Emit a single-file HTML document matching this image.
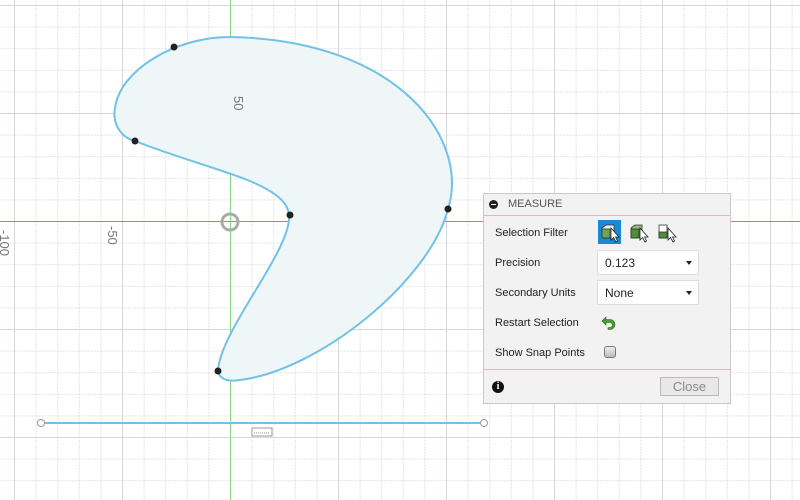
<!DOCTYPE html>
<html><head><meta charset="utf-8"><style>
body{margin:0;width:800px;height:500px;overflow:hidden;background:#fff;font-family:"Liberation Sans",sans-serif;}
#p{position:absolute;left:483px;top:193px;width:248px;height:211px;background:#f2f2f2;border:1px solid #c8c8c8;box-sizing:border-box;font-size:11px;color:#222;}
.hd{height:21px;border-bottom:1px solid #e2b8b8;line-height:21px;color:#555;padding-left:24px;position:relative}
.hd:before{content:"";position:absolute;left:5px;top:6px;width:9px;height:9px;border-radius:50%;background:#222}
.hd:after{content:"";position:absolute;left:7px;top:10px;width:5px;height:1px;background:#fff}
.lb{position:absolute;left:11px}
.dd{position:absolute;left:113px;width:102px;height:25px;background:#fff;border:1px solid #ddd;box-sizing:border-box;line-height:24px;padding-left:7px;font-size:12px}
.dd:after{content:"";position:absolute;right:6px;top:10px;border:3px solid transparent;border-top:4px solid #222}
.ft{position:absolute;left:0;right:0;top:175px;border-top:1px solid #e2b8b8}
.btn{position:absolute;left:176px;top:183px;width:59px;height:19px;border:1px solid #bbb;box-sizing:border-box;background:#e8e8e8;color:#888;font-size:13px;text-align:center;line-height:17px}
</style></head><body>
<svg width="800" height="500" style="position:absolute;left:0;top:0">
<defs><pattern id="g" x="14" y="5" width="21.6" height="21.6" patternUnits="userSpaceOnUse"><path d="M0.5 0V21.6M0 0.5H21.6" stroke="#dfe4e4" stroke-width="1" stroke-dasharray="2 1" fill="none"/></pattern></defs>
<rect width="800" height="500" fill="url(#g)"/>
<g fill="#d3d9d9">
<rect x="14" y="0" width="1" height="500"/><rect x="122" y="0" width="1" height="500"/><rect x="338" y="0" width="1" height="500"/><rect x="446" y="0" width="1" height="500"/><rect x="554" y="0" width="1" height="500"/><rect x="662" y="0" width="1" height="500"/><rect x="770" y="0" width="1" height="500"/>
<rect x="0" y="5" width="800" height="1"/><rect x="0" y="329" width="800" height="1"/><rect x="0" y="437" width="800" height="1"/>
</g>
<rect x="0" y="113" width="800" height="1" fill="#ebcccc"/>
<rect x="0" y="221" width="800" height="1" fill="#e07070"/>
<rect x="230" y="0" width="1" height="500" fill="#86d886"/>
<path d="M230,37 C175,37 120,70 115,108 C112,125 122,138 135,141 C170,155 210,166 245,179 C270,189 288,200 289,215 C292,250 220,330 218,371 C220,380 228,382 240,380 C320,370 430,280 448,209 C470,140 400,40 230,37 Z" fill="#eef6f8" stroke="#71c1e8" stroke-width="2"/>
<g fill="#222"><circle cx="174" cy="47" r="3.5"/><circle cx="135" cy="141" r="3.5"/><circle cx="290" cy="215" r="3.5"/><circle cx="448" cy="209" r="3.5"/><circle cx="218" cy="371" r="3.5"/></g>
<circle cx="230" cy="222" r="8" fill="none" stroke="#aaa" stroke-width="3"/>
<line x1="41" y1="423" x2="484" y2="423" stroke="#71c1e8" stroke-width="2"/>
<circle cx="41" cy="423" r="3.5" fill="#fff" stroke="#999"/><circle cx="484" cy="423" r="3.5" fill="#fff" stroke="#999"/>
<rect x="252" y="428" width="20" height="8" fill="#fff" stroke="#999"/><line x1="254" y1="433" x2="270" y2="433" stroke="#999" stroke-dasharray="1 1"/>
<g fill="#777" font-size="13" font-family="Liberation Sans">
<text transform="translate(234,96) rotate(90)">50</text>
<text transform="translate(108,226) rotate(90)">-50</text>
<text transform="translate(0,230) rotate(90)">-100</text>
</g>
</svg>
<div id="p">
<div class="hd">MEASURE</div>
<div class="lb" style="top:33px">Selection Filter</div>
<div style="position:absolute;left:114px;top:26px;width:23px;height:24px;background:#1a8ad4"></div>
<svg style="position:absolute;left:114px;top:26px" width="80" height="24">
<g stroke="#333" stroke-width="0.8">
<path d="M4 8 L8 5 H16 V15 L12 18 H4Z" fill="#eee"/><rect x="4" y="9" width="8" height="9" fill="#6aa84f"/>
<path d="M33 8 L37 5 H44 V15 L41 18 H33Z" fill="#8fc16f"/><rect x="33" y="9" width="8" height="9" fill="#4e8f3a"/>
<rect x="61" y="5" width="8" height="13" fill="#fff"/><rect x="61" y="12" width="8" height="6" fill="#4e8f3a"/>
</g>
<g fill="#fff" stroke="#222" stroke-width="0.8"><path d="M13 8 V20 L15.5 17.5 L18 22 L19.5 21 L17.5 17 H21Z"/><path d="M42 8 V20 L44.5 17.5 L47 22 L48.5 21 L46.5 17 H50Z"/><path d="M70 8 V20 L72.5 17.5 L75 22 L76.5 21 L74.5 17 H78Z"/></g>
</svg>
<div class="lb" style="top:63px">Precision</div>
<div class="dd" style="top:56px">0.123</div>
<div class="lb" style="top:93px">Secondary Units</div>
<div class="dd" style="top:86px">None</div>
<div class="lb" style="top:123px">Restart Selection</div>
<svg style="position:absolute;left:116px;top:119px" width="18" height="18"><path d="M6 4 L2 8 L6 12 V9.5 H10 A2.5 2.5 0 0 1 10 14.5 H8 V16.5 H10 A4.5 4.5 0 0 0 10 6.5 H6Z" fill="#4d9a2e" stroke="#2d6a1a" stroke-width="0.6"/></svg>
<div class="lb" style="top:153px">Show Snap Points</div>
<div style="position:absolute;left:120px;top:152px;width:12px;height:12px;border:1px solid #777;border-radius:3px;background:linear-gradient(#eee,#bbb);box-sizing:border-box"></div>
<div class="ft"></div>
<div style="position:absolute;left:8px;top:187px;width:12px;height:12px;border-radius:50%;background:#111;color:#fff;font-size:10px;font-weight:bold;text-align:center;line-height:12px;font-family:'Liberation Serif',serif">i</div>
<div class="btn">Close</div>
</div>
</body></html>
